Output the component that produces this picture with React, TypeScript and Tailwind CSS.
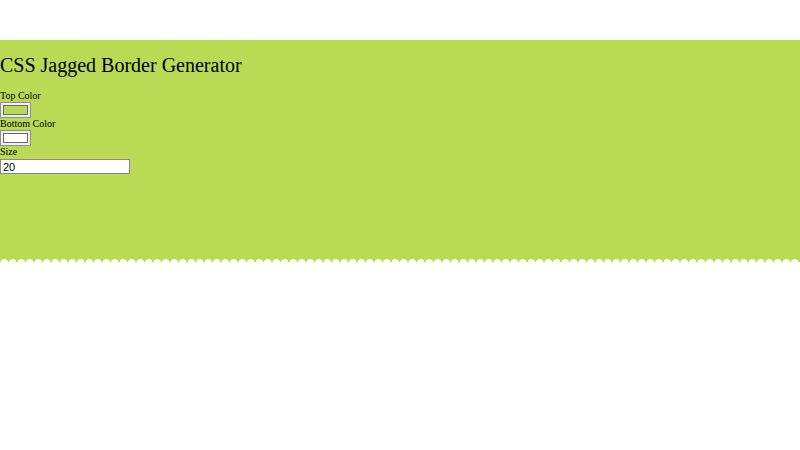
import { useState } from "react";

// swatch box that looks like the browser's colour picker button
const ColorBox = ({ color }: { color: string }) => (
  <div className="w-[31px] h-[16px] border border-[#8f8f8f] bg-[#efefef] p-[2px]">
    <div className="w-full h-full border border-[#6b6b6b]" style={{ backgroundColor: color }} />
  </div>
);

const App = () => {
  const [topColor] = useState("#bada55");
  const [bottomColor] = useState("#ffffff");
  const [size, setSize] = useState("20");

  return (
    <div className="w-[800px] h-[450px] bg-white text-black font-['Liberation_Serif','Times_New_Roman',serif]">
      <div className="h-[40px]" />
      {/* green panel with the controls */}
      <section className="h-[218px] bg-[#bada55] pt-[13px]">
        <h1 className="text-[20px] leading-[24px] font-normal">CSS Jagged Border Generator</h1>
        <div className="mt-[13px] flex flex-col items-start">
          <label className="text-[10px] leading-[12px]">Top Color</label>
          <ColorBox color={topColor} />
          <label className="text-[10px] leading-[12px]">Bottom Color</label>
          <ColorBox color={bottomColor} />
          <label className="text-[10px] leading-[12px]">Size</label>
          <input
            value={size}
            onChange={(e) => setSize(e.target.value)}
            className="mt-[1px] w-[130px] h-[15px] border border-[#8a8a8a] bg-white px-[2px] text-[11px] leading-[13px] font-['Liberation_Sans',Arial,sans-serif] outline-none"
          />
        </div>
      </section>
      {/* scalloped edge */}
      <div className="h-[5px] bg-[#bada55] bg-[radial-gradient(circle_at_50%_100%,#ffffff_3.6px,transparent_4.2px)] bg-[length:8.5px_5px] bg-repeat-x" />
    </div>
  );
};

export default App;
